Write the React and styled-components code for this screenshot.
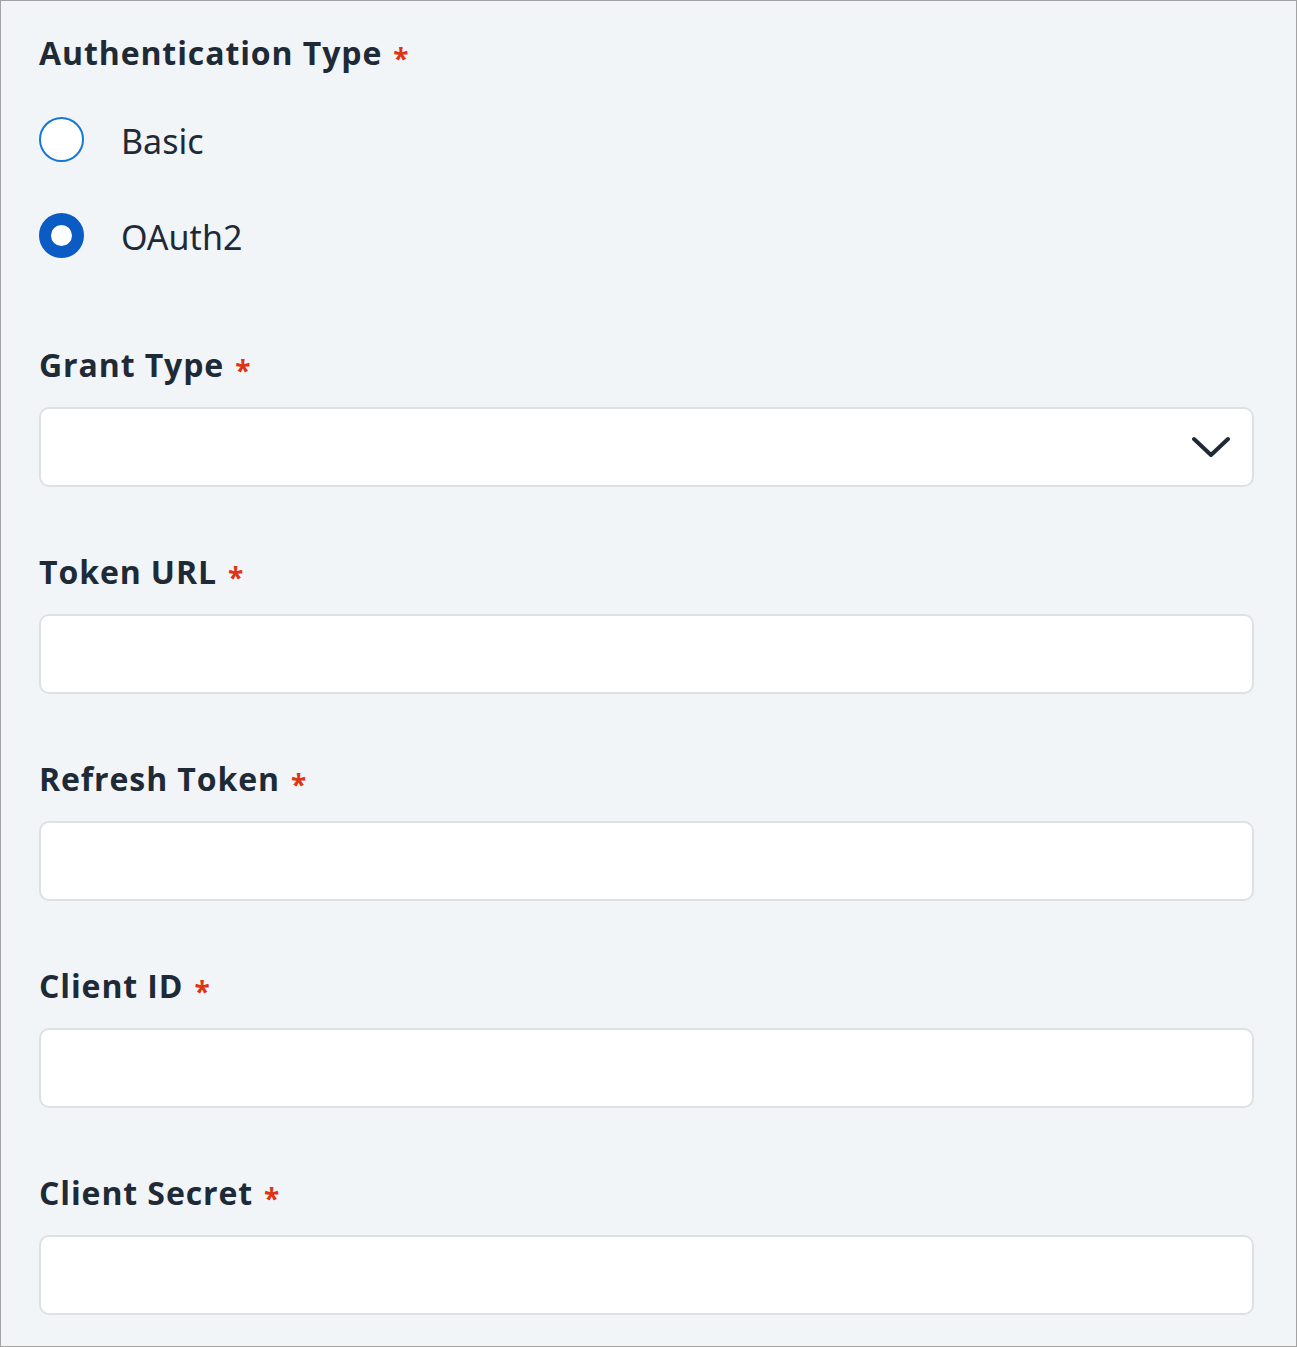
import React, { useState } from 'react';
import styled, { createGlobalStyle } from 'styled-components';

const GlobalStyle = createGlobalStyle`
  html, body {
    margin: 0;
    padding: 0;
    background: #ffffff;
  }
  * {
    box-sizing: border-box;
  }
`;

const Panel = styled.div`
  width: 1297px;
  height: 1347px;
  border: 1px solid #a3a3a3;
  background: #f2f5f8;
  padding: 30px 43px 30px 38px;
  font-family: "Noto Sans", "Open Sans", sans-serif;
  color: #1e2a36;
  display: flex;
  flex-direction: column;
`;

const Group = styled.div`
  display: flex;
  flex-direction: column;
  margin-top: ${(p) => p.$top || 0}px;
`;

const Label = styled.div`
  font-family: "Open Sans", "Noto Sans", sans-serif;
  font-size: 32px;
  font-weight: 700;
  line-height: 44px;
  height: 44px;
  display: flex;
  align-items: baseline;
  gap: 11px;
  letter-spacing: 0.9px;
`;

const Required = styled.span`
  color: #dd3414;
  font-size: 28px;
  font-weight: 700;
  letter-spacing: 0;
  transform: translateY(4px);
`;

const RadioList = styled.div`
  display: flex;
  flex-direction: column;
  gap: 48px;
  margin-top: 40px;
`;

const RadioRow = styled.label`
  display: flex;
  align-items: center;
  gap: 37px;
  height: 48px;
  cursor: pointer;
`;

const Circle = styled.span`
  width: 45px;
  height: 45px;
  border-radius: 50%;
  background: #ffffff;
  border: ${(p) => (p.$checked ? '12px solid #0a5bc4' : '2px solid #1479d6')};
  flex-shrink: 0;
`;

const RadioText = styled.span`
  font-size: 34px;
  font-weight: 400;
  color: #1e2a36;
  padding-top: 4px;
`;

const Input = styled.div`
  margin-top: 20px;
  height: 80px;
  width: 1215px;
  background: #ffffff;
  border: 2px solid #dde1e6;
  border-radius: 10px;
  display: flex;
  align-items: center;
  justify-content: flex-end;
  padding-right: 22px;
`;

const Field = ({ label, top, select }) => (
  <Group $top={top}>
    <Label>
      {label}
      <Required>*</Required>
    </Label>
    <Input>
      {select && (
        <svg width="38" height="22" viewBox="0 0 38 22">
          <polyline
            points="2,3 19,19 36,3"
            fill="none"
            stroke="#1e2a36"
            strokeWidth="4"
            strokeLinecap="round"
            strokeLinejoin="round"
          />
        </svg>
      )}
    </Input>
  </Group>
);

export default function App() {
  const [auth, setAuth] = useState('oauth2');

  return (
    <>
      <GlobalStyle />
      <Panel>
        <Group>
          <Label>
            Authentication Type
            <Required>*</Required>
          </Label>
          <RadioList>
            <RadioRow onClick={() => setAuth('basic')}>
              <Circle $checked={auth === 'basic'} />
              <RadioText>Basic</RadioText>
            </RadioRow>
            <RadioRow onClick={() => setAuth('oauth2')}>
              <Circle $checked={auth === 'oauth2'} />
              <RadioText>OAuth2</RadioText>
            </RadioRow>
          </RadioList>
        </Group>
        <Field label="Grant Type" top={84} select />
        <Field label="Token URL" top={63} />
        <Field label="Refresh Token" top={63} />
        <Field label="Client ID" top={63} />
        <Field label="Client Secret" top={63} />
      </Panel>
    </>
  );
}
